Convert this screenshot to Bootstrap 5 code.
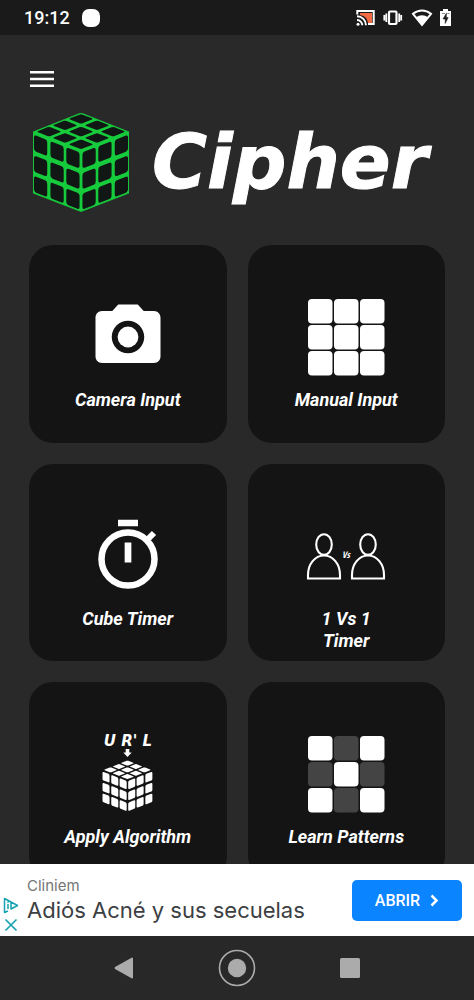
<!DOCTYPE html>
<html lang="en">
<head>
<meta charset="utf-8">
<meta name="viewport" content="width=device-width, initial-scale=1">
<title>Cipher</title>
<link href="https://cdn.jsdelivr.net/npm/bootstrap@5.3.0/dist/css/bootstrap.min.css" rel="stylesheet">
<style>
  body { background: #292929; color: #fff; font-family: Roboto, "Liberation Sans", sans-serif; }
  .status-bar { background: #1a1a1a; height: 35px; padding: 0 22px 0 24px; font-size: 18px; font-weight: 500; line-height: 35px; }
  .screen { min-height: 0; overflow-y: auto; scrollbar-width: none; padding: 36px 29px 29px; }
  .screen::-webkit-scrollbar { display: none; }
  .brand { margin: 26px 0 34px 4px; gap: 23px; height: 98px; }
  .brand h1 { font: italic bold 75px/96px "DejaVu Sans", Verdana, sans-serif; -webkit-text-stroke: 1px #fff; }
  .tiles { --bs-gutter-x: 21px; --bs-gutter-y: 21px; }
  .tile { aspect-ratio: 1; border-radius: 24px; background: #141414; color: #fff; padding-top: 53px; gap: 13px;
          font-size: 18px; line-height: 22px; font-weight: 700; font-style: italic; }
  .tile svg { width: 78px; height: 78px; overflow: visible; }
  .tile-label { max-width: 140px; }
  .ad { background: #fff; height: 72px; padding: 0 12px 0 2px; font-family: Inter, Roboto, sans-serif; }
  .ad-marks { width: 18px; padding-top: 33px; gap: 4px; }
  .ad-brand { color: #757575; font-size: 15px; line-height: 20px; }
  .ad-title { color: #3c4043; font-size: 22px; line-height: 28px; }
  .ad-copy { margin-left: 7px; padding-top: 12px; }
  .ad-open { background: #0a84ff; color: #fff; width: 110px; height: 41px; border-radius: 5px; margin-top: 16px;
             font: 500 16px/20px Roboto, sans-serif; gap: 10px; }
  .nav-keys { background: #282828; height: 64px; padding: 0 66px; }
</style>
</head>
<body>
<svg class="d-none" aria-hidden="true">
  <defs>
    <!-- one cube face on a 30 by 30 plane, skewed into place for each side -->
    <g id="face">
      <rect x=".6" y="1.2" width="8.3" height="7.900" rx="1.3"/><rect x="10.9" y="1.2" width="8.3" height="7.900" rx="1.3"/><rect x="20.8" y="1.2" width="8.3" height="7.900" rx="1.3"/>
      <rect x=".6" y="11.4" width="8.3" height="7.900" rx="1.3"/><rect x="10.9" y="11.4" width="8.3" height="7.900" rx="1.3"/><rect x="20.8" y="11.4" width="8.3" height="7.900" rx="1.3"/>
      <rect x=".6" y="21.4" width="8.3" height="7.900" rx="1.3"/><rect x="10.9" y="21.4" width="8.3" height="7.900" rx="1.3"/><rect x="20.8" y="21.4" width="8.3" height="7.900" rx="1.3"/>
    </g>
    <g id="lid">
      <rect x=".8" y=".8" width="7.8" height="7.8" rx="1"/><rect x="10.8" y=".8" width="7.8" height="7.8" rx="1"/><rect x="20.8" y=".8" width="7.8" height="7.8" rx="1"/>
      <rect x=".8" y="10.8" width="7.8" height="7.8" rx="1"/><rect x="10.8" y="10.8" width="7.8" height="7.8" rx="1"/><rect x="20.8" y="10.8" width="7.8" height="7.8" rx="1"/>
      <rect x=".8" y="20.8" width="7.8" height="7.8" rx="1"/><rect x="10.8" y="20.8" width="7.8" height="7.8" rx="1"/><rect x="20.8" y="20.8" width="7.8" height="7.8" rx="1"/>
    </g>
    <g id="cube">
      <use href="#lid" transform="matrix(1.6 .633 -1.6 .633 48 0)"/>
      <use href="#face" transform="matrix(1.6 .617 0 2.033 0 19)"/>
      <use href="#face" transform="matrix(-1.6 .617 0 2.033 96 19)"/>
    </g>
  </defs>
</svg>

<div class="vh-100 d-flex flex-column overflow-hidden">
  <header class="status-bar d-flex align-items-center flex-shrink-0">
    <span>19:12</span>
    <svg class="ms-2" width="26" height="18" viewBox="0 0 26 18" aria-hidden="true"><rect x="4" y="0" width="18" height="18" rx="7" fill="#fff"/></svg>
    <svg class="ms-auto" width="96" height="20" viewBox="0 0 96 20" fill="none" stroke="#fff" aria-hidden="true">
      <path d="M4 5h12v10h-4C11 10 9 8 4 7z" fill="#f26b43" stroke="none"/>
      <path d="M1.300 6.500V3h16.400v13H12" stroke-width="2"/>
      <path d="M1 8.300a9 9 0 0 1 9 9M1 12a5.300 5.300 0 0 1 5.300 5.300" stroke-width="1.900"/>
      <circle cx="2" cy="16.300" r="1.500" fill="#fff" stroke="none"/>
      <rect x="33" y="3.500" width="7.500" height="12.500" rx="1" stroke-width="2.200"/>
      <path d="M30.300 5.500v8.500M43.200 5.500v8.500M28.300 7v5.500M45.200 7v5.500" stroke-width="1.800"/>
      <path d="M57 5.800C62.500 1.300 69.500 1.300 75 5.800L66 17z" stroke-width="2"/>
      <path d="M60 9.500c3.800-3 8.200-3 12 0L66 17z" fill="#fff" stroke="none"/>
      <path d="M87 1h5v2h3v15H84V3h3z" fill="#fff" stroke="none"/>
      <path d="M90.500 5 87 11h2.200v4.500l3-6H90.300zM86 5.500h3M91.500 5.500h2" fill="#1a1a1a" stroke="#1a1a1a" stroke-width=".5"/>
    </svg>
  </header>

  <main class="screen flex-fill">
    <button type="button" class="btn p-0 border-0 d-block lh-1" aria-label="Menu">
      <svg class="d-block" width="26" height="16" viewBox="0 0 26 16" fill="#fff"><path d="M1 0h24v2.600H1zM1 6.700h24v2.600H1zM1 13.400h24V16H1z"/></svg>
    </button>

    <div class="brand d-flex align-items-center">
      <svg class="flex-shrink-0" width="96" height="99" viewBox="0 0 96 99" aria-hidden="true">
        <path d="M48 0 96 19v61L48 98.500 0 80V19z" fill="#17cc3c" stroke="#17cc3c" stroke-width=".8"/>
        <use href="#cube" fill="#111715"/>
      </svg>
      <h1 class="m-0">Cipher</h1>
    </div>

    <div class="row row-cols-2 tiles">
      <div class="col">
        <button type="button" class="tile w-100 border-0 d-flex flex-column align-items-center">
          <svg viewBox="0 0 24 24" fill="#fff"><circle cx="12" cy="12" r="3.200"/><path d="M9 2 7.170 4H4c-1.100 0-2 .9-2 2v12c0 1.100.9 2 2 2h16c1.100 0 2-.9 2-2V6c0-1.100-.9-2-2-2h-3.170L15 2zm3 15c-2.760 0-5-2.240-5-5s2.240-5 5-5 5 2.240 5 5-2.240 5-5 5z"/></svg>
          <span class="tile-label">Camera Input</span>
        </button>
      </div>
      <div class="col">
        <button type="button" class="tile w-100 border-0 d-flex flex-column align-items-center">
          <svg viewBox="0 0 78 78" fill="#fff"><rect x="1" y="1" width="24.500" height="24.500" rx="4"/><rect x="27" y="1" width="24.500" height="24.500" rx="4"/><rect x="53" y="1" width="24.500" height="24.500" rx="4"/><rect x="1" y="27" width="24.500" height="24.500" rx="4"/><rect x="27" y="27" width="24.500" height="24.500" rx="4"/><rect x="53" y="27" width="24.500" height="24.500" rx="4"/><rect x="1" y="53" width="24.500" height="24.500" rx="4"/><rect x="27" y="53" width="24.500" height="24.500" rx="4"/><rect x="53" y="53" width="24.500" height="24.500" rx="4"/></svg>
          <span class="tile-label">Manual Input</span>
        </button>
      </div>
      <div class="col">
        <button type="button" class="tile w-100 border-0 d-flex flex-column align-items-center">
          <svg viewBox="0 0 78 78" fill="none" stroke="#fff"><circle cx="39" cy="42" r="26.500" stroke-width="6.500"/><path d="M29 6h20M39 25.500v20" stroke-width="6.700"/><path d="m57.500 23.500 7.500-7.500" stroke-width="6"/></svg>
          <span class="tile-label">Cube Timer</span>
        </button>
      </div>
      <div class="col">
        <button type="button" class="tile w-100 border-0 d-flex flex-column align-items-center">
          <svg viewBox="0 0 78 78" fill="none" stroke="#fff" stroke-width="2.100"><ellipse cx="17" cy="27.500" rx="7.800" ry="10.300"/><path d="M1 61.500V58c0-11 7-19.500 16-19.500S33 47 33 58v3.500z"/><ellipse cx="61" cy="27.500" rx="7.800" ry="10.300"/><path d="M45 61.500V58c0-11 7-19.500 16-19.500S77 47 77 58v3.500z"/><text x="39" y="41" text-anchor="middle" font-size="9" font-family="Open Sans Condensed, Roboto, sans-serif" fill="#fff" stroke="none">Vs</text></svg>
          <span class="tile-label px-4">1 Vs 1 Timer</span>
        </button>
      </div>
      <div class="col">
        <button type="button" class="tile w-100 border-0 d-flex flex-column align-items-center">
          <svg viewBox="0 0 78 78" fill="#fff"><text x="39" y="11" text-anchor="middle" font-size="15" font-family="DejaVu Sans, sans-serif">U R' L</text><path d="M36.700 14h3.600v3.500h2.400L38.500 22l-4.200-4.500h2.400z"/><g transform="translate(13 25) scale(.53)"><use href="#cube"/></g></svg>
          <span class="tile-label">Apply Algorithm</span>
        </button>
      </div>
      <div class="col">
        <button type="button" class="tile w-100 border-0 d-flex flex-column align-items-center">
          <svg viewBox="0 0 78 78" fill="#fff"><rect x="1" y="1" width="24.500" height="24.500" rx="4"/><rect x="27" y="1" width="24.500" height="24.500" rx="4" fill="#444"/><rect x="53" y="1" width="24.500" height="24.500" rx="4"/><rect x="1" y="27" width="24.500" height="24.500" rx="4" fill="#444"/><rect x="27" y="27" width="24.500" height="24.500" rx="4"/><rect x="53" y="27" width="24.500" height="24.500" rx="4" fill="#444"/><rect x="1" y="53" width="24.500" height="24.500" rx="4"/><rect x="27" y="53" width="24.500" height="24.500" rx="4" fill="#444"/><rect x="53" y="53" width="24.500" height="24.500" rx="4"/></svg>
          <span class="tile-label">Learn Patterns</span>
        </button>
      </div>
    </div>
  </main>

  <aside class="ad d-flex flex-shrink-0 align-items-start">
    <div class="ad-marks d-flex flex-column align-items-center flex-shrink-0">
      <svg width="16" height="17" viewBox="0 0 16 17" fill="none" stroke="#16a2b0" stroke-width="1.500" stroke-linejoin="round"><path d="M5 14 1.500 15.500V1.500L14.500 8.500 8 12V5.500M5 4.500v1.200M5 7v5"/></svg>
      <svg width="14" height="14" viewBox="0 0 14 14" stroke="#16a2b0" stroke-width="1.700"><path d="m1.500 1.500 11 11M12.500 1.500l-11 11"/></svg>
    </div>
    <div class="ad-copy flex-fill">
      <div class="ad-brand">Cliniem</div>
      <div class="ad-title text-nowrap">Adiós Acné y sus secuelas</div>
    </div>
    <button type="button" class="ad-open btn p-0 border-0 d-flex align-items-center justify-content-center flex-shrink-0">ABRIR
      <svg width="9" height="13" viewBox="0 0 9 13" fill="none" stroke="#fff" stroke-width="2.500"><path d="m1.500 1.500 5 5-5 5"/></svg>
    </button>
  </aside>

  <nav class="nav-keys d-flex align-items-center justify-content-between flex-shrink-0" aria-label="System">
    <button type="button" class="btn p-0 border-0 lh-1 ms-5" aria-label="Back"><svg class="d-block" width="20" height="22" viewBox="0 0 20 22" fill="#ababab"><path d="M18 .5q1 0 1 1v19q0 1-1 1L1 12q-1-1 0-2z"/></svg></button>
    <button type="button" class="btn p-0 border-0 lh-1" aria-label="Home"><svg class="d-block" width="38" height="38" viewBox="0 0 38 38" fill="#ababab"><circle cx="19" cy="19" r="17.500" fill="none" stroke="#ababab" stroke-width="1.600"/><circle cx="19" cy="19" r="9.200"/></svg></button>
    <button type="button" class="btn p-0 border-0 lh-1 me-5" aria-label="Recent apps"><svg class="d-block" width="20" height="20" viewBox="0 0 20 20" fill="#ababab"><rect width="20" height="20" rx="1.500"/></svg></button>
  </nav>
</div>
<script src="https://cdn.jsdelivr.net/npm/bootstrap@5.3.0/dist/js/bootstrap.bundle.min.js"></script>
</body>
</html>
